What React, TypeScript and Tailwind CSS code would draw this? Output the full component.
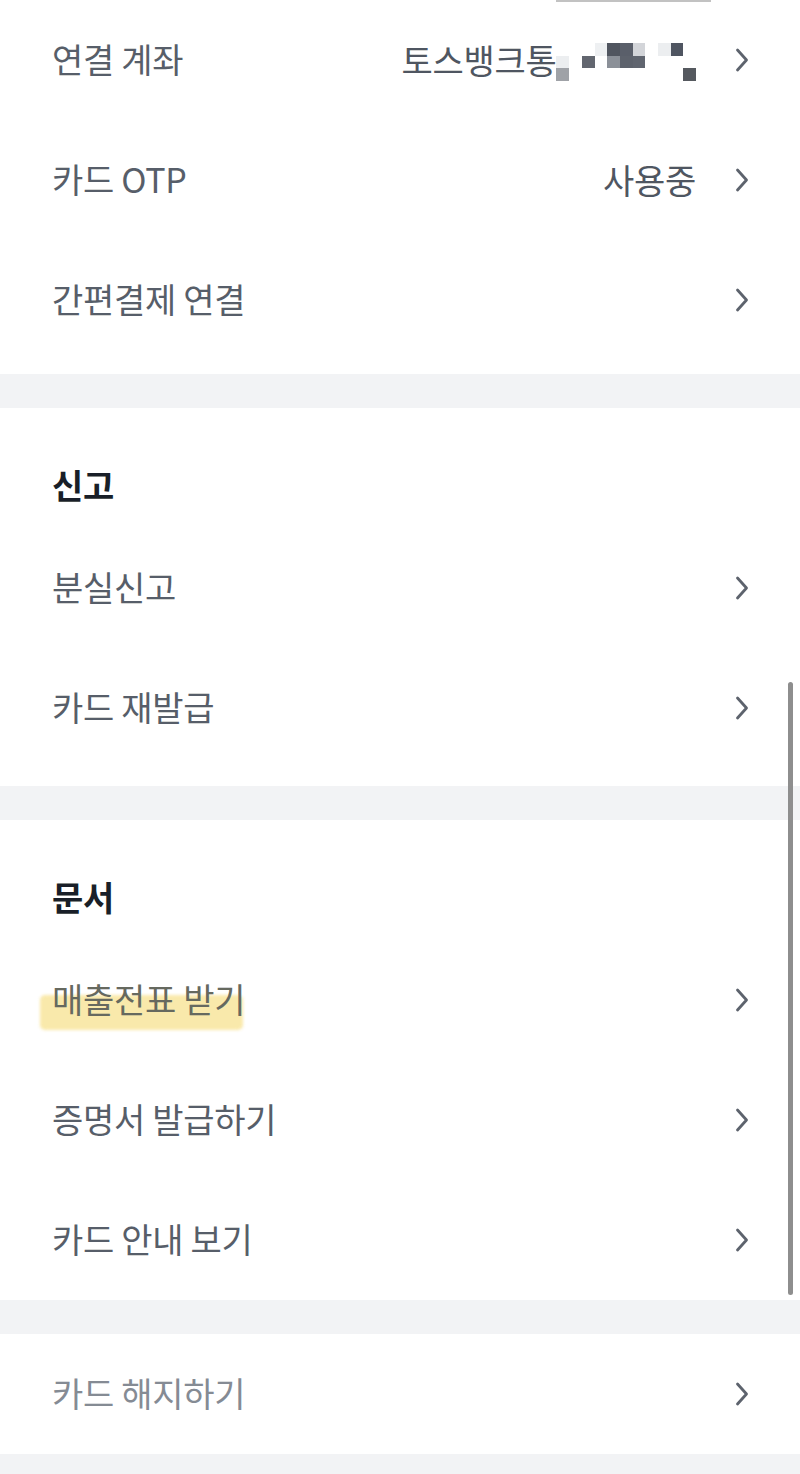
import type { ReactNode } from "react";

const font = { fontFamily: '"Noto Sans CJK KR", "Noto Sans", sans-serif' };

function Chevron() {
  return (
    <svg width="16" height="24" viewBox="0 0 16 24" className="shrink-0">
      <path
        d="M3.5 2 L12.5 12 L3.5 22"
        fill="none"
        stroke="#5d636d"
        strokeWidth="2.8"
        strokeLinecap="round"
        strokeLinejoin="round"
      />
    </svg>
  );
}

// mosaic cells that hide the account number: [row, col, colour]
const mosaic: [number, number, string][] = [
  [0, 3, "#eef0f2"],
  [0, 4, "#50555f"],
  [0, 5, "#5a5f6a"],
  [0, 6, "#d3d5d9"],
  [0, 8, "#eceef0"],
  [0, 9, "#4f5561"],
  [1, 0, "#eceef0"],
  [1, 2, "#62666f"],
  [1, 4, "#8b9098"],
  [1, 5, "#5d626c"],
  [1, 6, "#60656f"],
  [2, 0, "#9fa2a7"],
  [2, 10, "#55595f"],
];

function Mosaic() {
  const cells = Array.from({ length: 33 }, (_, i) => {
    const r = Math.floor(i / 11);
    const c = i % 11;
    const hit = mosaic.find((m) => m[0] === r && m[1] === c);
    return (
      <div key={i} style={{ backgroundColor: hit ? hit[2] : "transparent" }} />
    );
  });
  return (
    <div className="mt-[4px] grid grid-cols-[repeat(11,12.7px)] grid-rows-[repeat(3,12.4px)]">
      {cells}
    </div>
  );
}

function Row({
  label,
  value,
  muted,
  highlight,
}: {
  label: string;
  value?: ReactNode;
  muted?: boolean;
  highlight?: boolean;
}) {
  return (
    <div className="flex h-[120px] items-center pl-[52px] pr-[50px]">
      <div className="relative flex-1">
        {highlight && (
          <span className="absolute left-[-12px] top-[13px] h-[35px] w-[203px] rounded-[5px] bg-[#f9e7a2] opacity-90 blur-[1.5px]" />
        )}
        <span
          className={`relative text-[34px] leading-none tracking-[-0.3px] ${
            muted ? "text-[#858b94]" : highlight ? "text-[#66695f]" : "text-[#575e69]"
          }`}
        >
          {label}
        </span>
      </div>
      {value && (
        <div className="mr-[38px] flex items-center text-[34px] leading-none tracking-[-0.3px] text-[#4f5661]">
          {value}
        </div>
      )}
      <Chevron />
    </div>
  );
}

function Header({ title }: { title: string }) {
  return (
    <div className="h-[120px] pl-[52px] pt-[60px]">
      <span className="text-[34px] font-bold leading-none tracking-[-0.3px] text-[#191f28]">
        {title}
      </span>
    </div>
  );
}

function Gap({ h = "h-[34px]" }: { h?: string }) {
  return <div className={`${h} bg-[#f2f3f5]`} />;
}

export default function App() {
  return (
    <div className="relative h-[1474px] w-[800px] overflow-hidden bg-white" style={font}>
      <div className="h-[2px] pl-[556px]">
        <div className="h-[2px] w-[155px] bg-[#c2c2c2]" />
      </div>
      <div className="-mt-[2px]">
        <Row
          label="연결 계좌"
          value={
            <>
              <span>토스뱅크통</span>
              <Mosaic />
            </>
          }
        />
        <Row label="카드 OTP" value={<span>사용중</span>} />
        <Row label="간편결제 연결" />
        <div className="h-[14px]" />
      </div>
      <Gap />
      <Header title="신고" />
      <Row label="분실신고" />
      <Row label="카드 재발급" />
      <div className="h-[18px]" />
      <Gap />
      <Header title="문서" />
      <Row label="매출전표 받기" highlight />
      <Row label="증명서 발급하기" />
      <Row label="카드 안내 보기" />
      <Gap />
      <Row label="카드 해지하기" muted />
      <Gap h="h-[40px]" />

      {/* scroll indicator */}
      <div className="absolute left-[788px] top-[682px] h-[613px] w-[5px] rounded-full bg-[#8e8e8e]" />
    </div>
  );
}
